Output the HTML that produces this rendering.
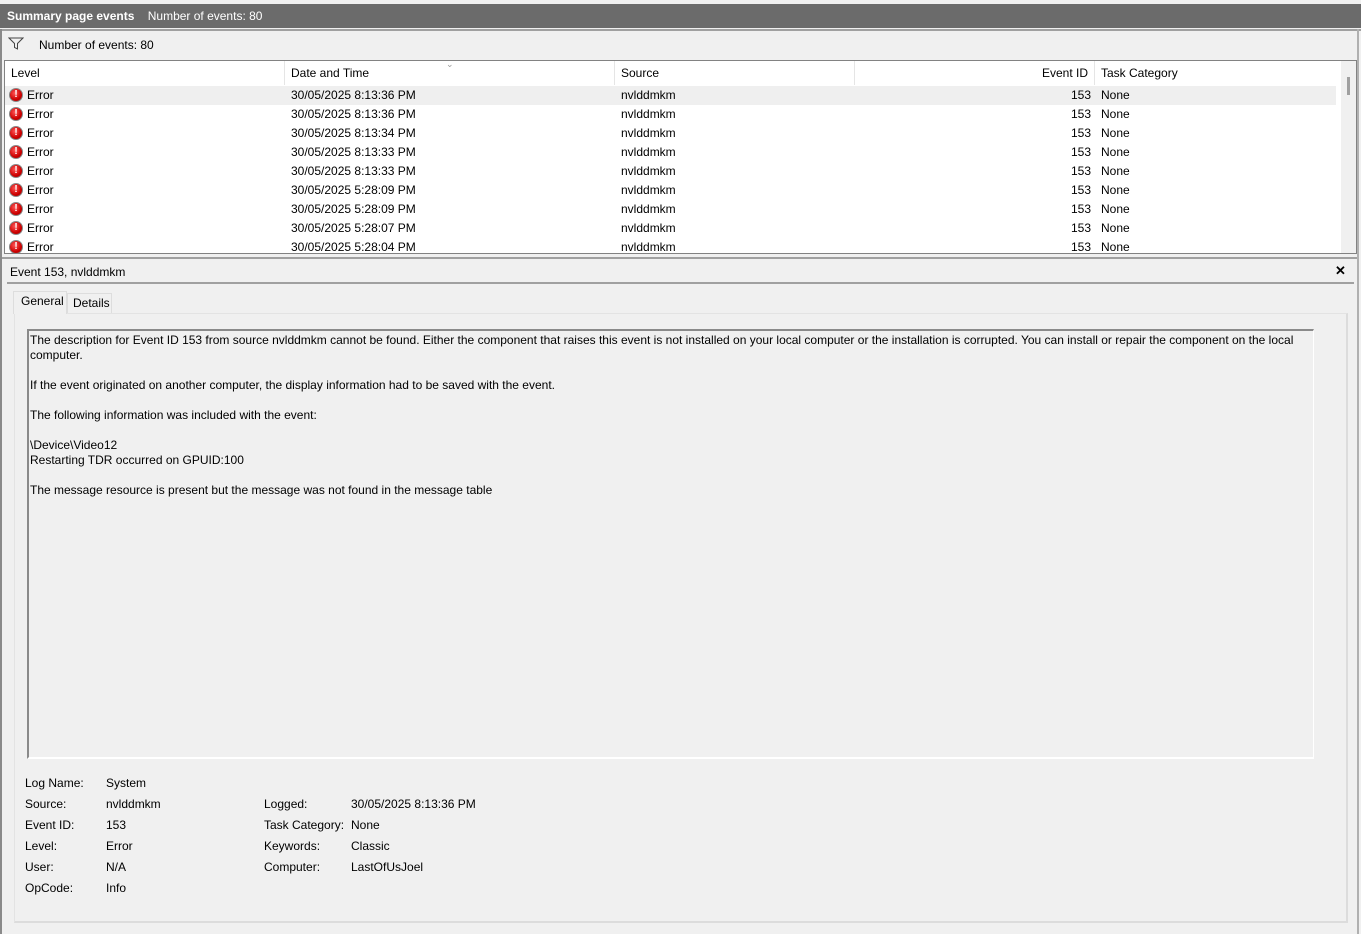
<!DOCTYPE html>
<html><head><style>
*{margin:0;padding:0;box-sizing:border-box}
html,body{width:1361px;height:934px;overflow:hidden}
body{background:#f0f0f0;font-family:"Liberation Sans",sans-serif;font-size:12px;color:#000;position:relative}
.a{position:absolute;white-space:nowrap}
.top{left:0;top:4px;width:1361px;height:24px;background:#6b6b6b;color:#fff;line-height:24px;padding-left:7px}
.list{left:4px;top:60px;width:1353px;height:194px;background:#fff;border:1px solid #828282;overflow:hidden}
.hdr{position:absolute;top:0;height:24px;line-height:24px;border-right:1px solid #e5e5e5;padding-left:6px}
.row{position:absolute;left:0;width:1331px;height:19px;line-height:19px}
.row span{position:absolute}
.ic{width:14px;height:14px;border-radius:50%;background:radial-gradient(circle at 40% 35%,#f55,#c00 60%,#900);border:1px solid #888;top:2px;left:4px;color:#fff;font-weight:bold;font-size:10px;line-height:12px;text-align:center}
</style></head><body>
<div class="a top"><b>Summary page events</b>&nbsp;&nbsp;&nbsp;&nbsp;Number of events: 80</div>
<div class="a" style="left:0;top:29px;width:1361px;height:2px;background:#a0a0a0"></div>
<div class="a" style="left:0;top:29px;width:2px;height:905px;background:#8a8a8a"></div>
<div class="a" style="left:1357px;top:29px;width:2px;height:905px;background:#b0b0b0"></div>
<svg class="a" style="left:8px;top:37px" width="16" height="13"><path d="M1 1H15L9.5 6.5V12L6.5 10.5V6.5Z" fill="none" stroke="#444"/></svg>
<div class="a" style="left:39px;top:38px">Number of events: 80</div>
<div class="a list">
<div class="hdr" style="left:0;width:280px">Level</div>
<div class="hdr" style="left:280px;width:330px">Date and Time</div>
<div class="a" style="left:441px;top:-2px;color:#999;font-size:9px">&#8964;</div>
<div class="hdr" style="left:610px;width:240px">Source</div>
<div class="hdr" style="left:850px;width:240px;text-align:right;padding-right:6px">Event ID</div>
<div class="hdr" style="left:1090px;width:241px;border:none">Task Category</div>
<div class="a" style="left:1336px;top:0;width:16px;height:192px;background:#f0f0f0"></div>
<div class="a" style="left:1342px;top:16px;width:3px;height:18px;background:#a0a0a0"></div>
<div id="rows"></div>
</div>
<script>
var t=["8:13:36","8:13:36","8:13:34","8:13:33","8:13:33","5:28:09","5:28:09","5:28:07","5:28:04"],h="";
t.forEach(function(x,i){h+='<div class="row" style="top:'+(25+i*19)+'px;'+(i==0?'background:#efefef':'')+'"><span class="ic">!</span><span style="left:22px">Error</span><span style="left:286px">30/05/2025 '+x+' PM</span><span style="left:616px">nvlddmkm</span><span style="left:1066px">153</span><span style="left:1096px">None</span></div>'});
document.getElementById("rows").innerHTML=h;
</script>
<div class="a" style="left:2px;top:257px;width:1355px;height:2px;background:#a0a0a0"></div>
<div class="a" style="left:10px;top:265px">Event 153, nvlddmkm</div>
<div class="a" style="left:1335px;top:263px;font-weight:bold;font-size:13px">✕</div>
<div class="a" style="left:7px;top:282px;width:1347px;height:2px;background:#a0a0a0"></div>
<div class="a" style="left:14px;top:313px;width:1334px;height:610px;border:1px solid #e3e3e3;border-right:2px solid #dcdcdc;border-bottom:2px solid #dcdcdc"></div>
<div class="a" style="left:13px;top:291px;width:54px;height:23px;background:#f0f0f0;border:1px solid #ddd;border-bottom:none;padding:2px 0 0 7px">General</div>
<div class="a" style="left:67px;top:293px;width:45px;height:20px;border:1px solid #ddd;border-bottom:none;padding:2px 0 0 5px">Details</div>
<div class="a" style="left:27px;top:329px;width:1287px;height:430px;border-top:2px solid #8a8a8a;border-left:2px solid #8a8a8a;border-right:1px solid #fff;border-bottom:2px solid #fff;padding:2px 0 0 1px;line-height:15px;white-space:normal">
The description for Event ID 153 from source nvlddmkm cannot be found. Either the component that raises this event is not installed on your local computer or the installation is corrupted. You can install or repair the component on the local computer.<br><br>If the event originated on another computer, the display information had to be saved with the event.<br><br>The following information was included with the event:<br><br>\Device\Video12<br>Restarting TDR occurred on GPUID:100<br><br>The message resource is present but the message was not found in the message table</div>
<div class="a" style="left:25px;top:773px;line-height:21px">Log Name:<br>Source:<br>Event ID:<br>Level:<br>User:<br>OpCode:</div>
<div class="a" style="left:106px;top:773px;line-height:21px">System<br>nvlddmkm<br>153<br>Error<br>N/A<br>Info</div>
<div class="a" style="left:264px;top:794px;line-height:21px">Logged:<br>Task Category:<br>Keywords:<br>Computer:</div>
<div class="a" style="left:351px;top:794px;line-height:21px">30/05/2025 8:13:36 PM<br>None<br>Classic<br>LastOfUsJoel</div>
</body></html>
